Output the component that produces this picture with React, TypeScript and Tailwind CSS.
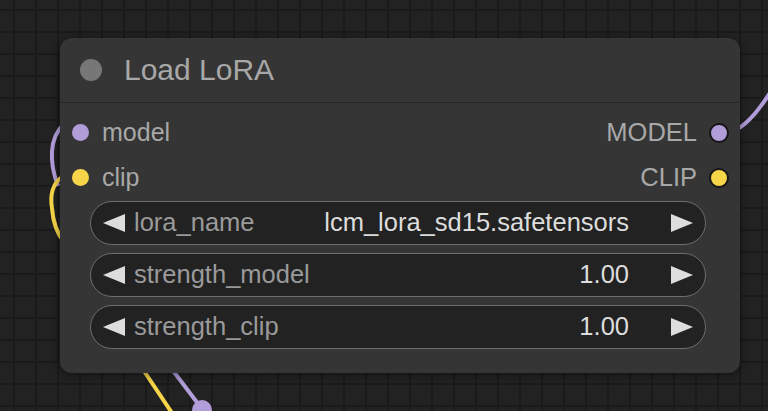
import React from "react";

function ArrowLeft() {
  return (
    <svg width="22" height="18" viewBox="0 0 22 18" className="shrink-0">
      <polygon points="22,0 22,18 0,9" fill="#dddddd" />
    </svg>
  );
}

function ArrowRight() {
  return (
    <svg width="22" height="18" viewBox="0 0 22 18" className="shrink-0">
      <polygon points="0,0 0,18 22,9" fill="#dddddd" />
    </svg>
  );
}

type WidgetProps = { label: string; value: string };

function Widget({ label, value }: WidgetProps) {
  return (
    <div className="flex h-[44px] items-center rounded-full border-[1.5px] border-[#6e6e6e] bg-[#222222] px-[12px]">
      <ArrowLeft />
      <span className="ml-[9px] text-[25.5px] leading-none text-[#9a9a9a]">{label}</span>
      <span className="ml-auto text-[25.5px] leading-none text-[#dddddd]">{value}</span>
      <span className="ml-[42px]">
        <ArrowRight />
      </span>
    </div>
  );
}

function Wires() {
  return (
    <svg
      className="pointer-events-none absolute inset-0"
      width="768"
      height="411"
      viewBox="0 0 768 411"
    >
      {/* links passing behind the node on the left */}
      <path d="M64 124 C49 138, 49 162, 58 186" stroke="#b19dd8" strokeWidth="4" fill="none" />
      <path d="M64 176 C52 182, 50 196, 52 208 C53 222, 56 232, 64 242" stroke="#f7d548" strokeWidth="4" fill="none" />
      {/* output link leaving to the right */}
      <path d="M736 130 C750 122, 760 108, 772 90" stroke="#b19dd8" strokeWidth="4" fill="none" />
      {/* links leaving the bottom */}
      <path d="M142 368 L174 416" stroke="#f7d548" strokeWidth="4" fill="none" />
      <path d="M171 368 L202 409" stroke="#b19dd8" strokeWidth="4" fill="none" />
      <circle cx="202" cy="410" r="10" fill="#b19dd8" />
    </svg>
  );
}

export default function App() {
  return (
    <div className="relative h-[411px] w-[768px] overflow-hidden bg-[#222222] bg-[linear-gradient(to_right,#1a1a1a_2px,transparent_2px),linear-gradient(to_bottom,#1a1a1a_2px,transparent_2px)] bg-[size:22px_22px] bg-[position:13px_9px] font-['Liberation_Sans',Arial,sans-serif]">
      <Wires />
      <div className="absolute left-[60px] top-[38px] flex h-[335px] w-[680px] flex-col rounded-[12px] bg-[#353535] shadow-[0_2px_10px_rgba(0,0,0,0.45)]">
        {/* title bar */}
        <div className="flex h-[65px] items-center border-b border-[#262626] pl-[20px]">
          <div className="h-[22px] w-[22px] rounded-full bg-[#777777]" />
          <span className="ml-[22px] text-[30px] leading-none text-[#a8a8a8]">Load LoRA</span>
        </div>

        {/* slots */}
        <div className="pt-[7px]">
          <div className="flex h-[45px] items-center justify-between pl-[12px] pr-[11px]">
            <div className="flex items-center">
              <div className="h-[17px] w-[17px] rounded-full bg-[#b19dd8]" />
              <span className="ml-[13px] text-[25px] leading-none text-[#a8a8a8]">model</span>
            </div>
            <div className="flex items-center">
              <span className="mr-[12px] text-[25.5px] leading-none text-[#a8a8a8]">MODEL</span>
              <div className="h-[20px] w-[20px] rounded-full border-[2.5px] border-[#161616] bg-[#b19dd8]" />
            </div>
          </div>
          <div className="flex h-[45px] items-center justify-between pl-[12px] pr-[11px]">
            <div className="flex items-center">
              <div className="h-[17px] w-[17px] rounded-full bg-[#f7d548]" />
              <span className="ml-[13px] text-[25px] leading-none text-[#a8a8a8]">clip</span>
            </div>
            <div className="flex items-center">
              <span className="mr-[12px] text-[25.5px] leading-none text-[#a8a8a8]">CLIP</span>
              <div className="h-[20px] w-[20px] rounded-full border-[2.5px] border-[#161616] bg-[#f7d548]" />
            </div>
          </div>
        </div>

        {/* widgets */}
        <div className="ml-[30px] mt-[1px] flex w-[616px] flex-col gap-[8px]">
          <Widget label="lora_name" value="lcm_lora_sd15.safetensors" />
          <Widget label="strength_model" value="1.00" />
          <Widget label="strength_clip" value="1.00" />
        </div>
      </div>
    </div>
  );
}
